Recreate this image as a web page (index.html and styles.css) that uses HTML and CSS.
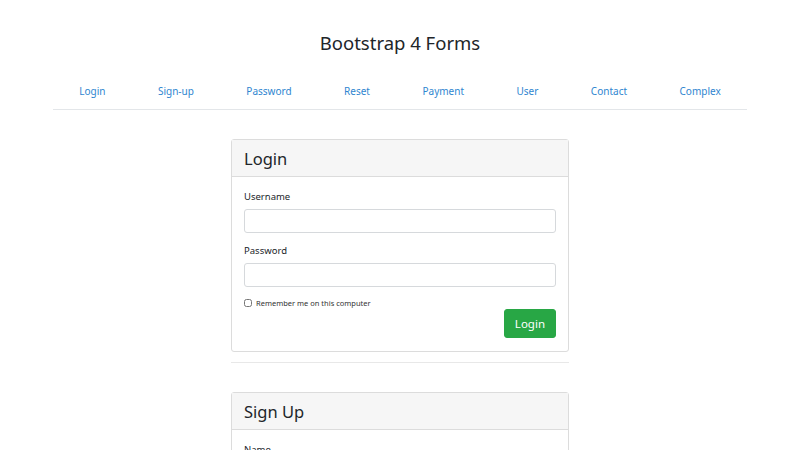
FILE: index.html
```html
<!DOCTYPE html>
<html>
<head>
<meta charset="utf-8">
<link rel="stylesheet" href="styles.css">
</head>
<body>
<header class="top">
  <h1 class="title">Bootstrap 4 Forms</h1>
  <nav class="nav">
    <a href="#">Login</a>
    <a href="#">Sign-up</a>
    <a href="#">Password</a>
    <a href="#">Reset</a>
    <a href="#">Payment</a>
    <a href="#">User</a>
    <a href="#">Contact</a>
    <a href="#">Complex</a>
  </nav>
</header>
<main class="main">
  <section class="card">
    <div class="card-header">Login</div>
    <div class="card-body">
      <label class="label">Username</label>
      <input class="input" type="text">
      <label class="label">Password</label>
      <input class="input" type="password">
      <label class="check"><input type="checkbox" class="checkbox"> Remember me on this computer</label>
      <div class="actions"><button class="btn">Login</button></div>
    </div>
  </section>
  <hr class="sep">
  <section class="card">
    <div class="card-header">Sign Up</div>
    <div class="card-body">
      <label class="label">Name</label>
      <input class="input" type="text">
    </div>
  </section>
</main>
</body>
</html>
```
FILE: styles.css
```css
html, body { margin: 0; padding: 0; background: #fff; }
body {
  font-family: "Noto Sans", "Open Sans", sans-serif;
  color: #212529;
  overflow: hidden;
  height: 450px;
}
.top { padding-top: 28px; }
.title {
  margin: 0;
  text-align: center;
  font-weight: 400;
  font-size: 18.5px;
  line-height: 30px;
}
.nav {
  display: flex;
  margin: 21px 53px 0;
  border-bottom: 1px solid #e3e6e9;
  padding-bottom: 9px;
}
.nav a {
  flex: 1 1 auto;
  text-align: center;
  color: #2f86d0;
  text-decoration: none;
  font-size: 10px;
  line-height: 18px;
  padding: 3px 8px 0;
}
.main {
  width: 338px;
  margin: 29px auto 0;
}
.card {
  border: 1px solid #dcdcdc;
  border-radius: 3px;
  background: #fff;
}
.card-header {
  background: #f6f6f6;
  border-bottom: 1px solid #dcdcdc;
  font-size: 16.5px;
  line-height: 24px;
  padding: 7px 12px 5px;
}
.card-body {
  padding: 12px 12px 13px;
  display: flex;
  flex-direction: column;
}
.label {
  font-size: 9.5px;
  line-height: 16px;
  margin-bottom: 4px;
}
.input {
  height: 24px;
  box-sizing: border-box;
  border: 1px solid #d6d9dc;
  border-radius: 3px;
  margin: 0 0 10px;
  padding: 0 6px;
}
.check {
  display: flex;
  align-items: center;
  gap: 4px;
  font-size: 7.5px;
  line-height: 12px;
  color: #333;
  margin-top: 0;
}
.checkbox {
  width: 8px;
  height: 8px;
  margin: 0;
}
.actions {
  display: flex;
  justify-content: flex-end;
  margin-top: 0;
}
.btn {
  background: #28a745;
  color: #fff;
  border: 1px solid #28a745;
  border-radius: 3px;
  font-family: inherit;
  font-size: 11.5px;
  height: 29px;
  padding: 0 10px;
}
.sep {
  border: 0;
  border-top: 1px solid #e8e8e8;
  margin: 10px 0 29px;
}
```
